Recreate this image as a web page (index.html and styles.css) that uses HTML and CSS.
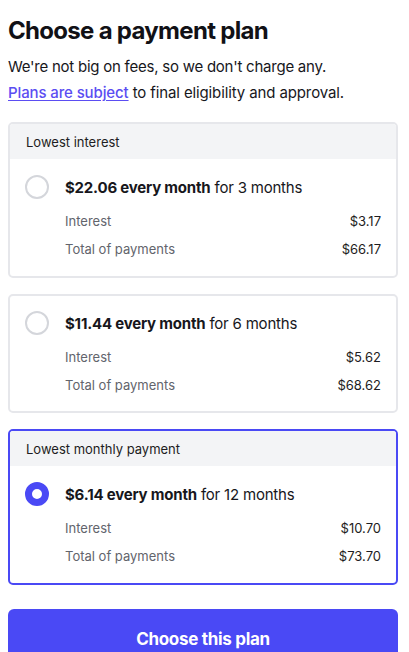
FILE: index.html
```html
<!DOCTYPE html>
<html lang="en">
<head>
<meta charset="utf-8">
<title>Choose a payment plan</title>
<link rel="stylesheet" href="styles.css">
</head>
<body>
<main class="page">
  <h1 class="title">Choose a payment plan</h1>
  <p class="lead lead-fees">We're not big on fees, so we don't charge any.</p>
  <p class="lead"><a class="link" href="#">Plans are subject</a> to final eligibility and approval.</p>

  <div class="plans">
    <div class="card">
      <div class="card-head">Lowest interest</div>
      <div class="card-body">
        <div class="plan-row">
          <span class="radio"></span>
          <span class="plan-text"><b>$22.06 every month</b> for 3 months</span>
        </div>
        <div class="details">
          <div class="detail"><span>Interest</span><span class="val">$3.17</span></div>
          <div class="detail"><span>Total of payments</span><span class="val">$66.17</span></div>
        </div>
      </div>
    </div>

    <div class="card">
      <div class="card-body">
        <div class="plan-row">
          <span class="radio"></span>
          <span class="plan-text"><b>$11.44 every month</b> for 6 months</span>
        </div>
        <div class="details">
          <div class="detail"><span>Interest</span><span class="val">$5.62</span></div>
          <div class="detail"><span>Total of payments</span><span class="val">$68.62</span></div>
        </div>
      </div>
    </div>

    <div class="card selected">
      <div class="card-head">Lowest monthly payment</div>
      <div class="card-body">
        <div class="plan-row">
          <span class="radio checked"></span>
          <span class="plan-text"><b>$6.14 every month</b> for 12 months</span>
        </div>
        <div class="details">
          <div class="detail"><span>Interest</span><span class="val">$10.70</span></div>
          <div class="detail"><span>Total of payments</span><span class="val">$73.70</span></div>
        </div>
      </div>
    </div>
  </div>

  <button class="cta" type="button">Choose this plan</button>
</main>
</body>
</html>
```
FILE: styles.css
```css
* { box-sizing: border-box; }
html, body { margin: 0; padding: 0; background: #fff; }
body {
  font-family: Inter, "Noto Sans", sans-serif;
  color: #17171c;
}
.page {
  padding: 15px 11px 0 8px;
  display: flex;
  flex-direction: column;
}
.title {
  margin: 0;
  font-size: 24px;
  line-height: 32px;
  font-weight: 700;
  letter-spacing: -0.7px;
  color: #111116;
}
.lead {
  margin: 0;
  font-size: 15px;
  line-height: 26px;
  letter-spacing: -0.12px;
}
.lead-fees { letter-spacing: -0.24px; }
.title + .lead { margin-top: 7px; }
.link {
  color: #5b4df2;
  text-decoration: underline;
  text-underline-offset: 2px;
  font-weight: 500;
}
.plans {
  margin-top: 16px;
  display: flex;
  flex-direction: column;
  gap: 16px;
}
.card {
  border: 2px solid #e6e7eb;
  border-radius: 5px;
  overflow: hidden;
  background: #fff;
}
.card.selected { border-color: #4a49f5; }
.card-head {
  background: #f3f4f6;
  height: 35px;
  padding: 0 16px;
  display: flex;
  align-items: center;
  font-size: 13px;
  color: #1d1d22;
}
.card-body {
  padding: 16px 15px 17px 15px;
}
.card-body:first-child {
  padding-top: 15px;
  padding-bottom: 16px;
}
.plan-row {
  display: flex;
  align-items: center;
  gap: 16px;
  height: 24px;
}
.radio {
  width: 24px;
  height: 24px;
  border-radius: 50%;
  border: 2px solid #d4d6db;
  flex: none;
  background: #fff;
}
.radio.checked {
  border: 7px solid #4a49f5;
}
.plan-text {
  font-size: 15px;
  letter-spacing: -0.2px;
  color: #17171c;
}
.plan-text b { font-weight: 700; }
.details {
  margin-top: 12px;
  padding-left: 40px;
  display: flex;
  flex-direction: column;
  gap: 8px;
}
.detail {
  display: flex;
  justify-content: space-between;
  font-size: 13px;
  line-height: 20px;
  color: #62646c;
}
.detail .val { color: #1d1d22; }
.cta {
  margin-top: 24px;
  height: 60px;
  border: none;
  border-radius: 6px;
  background: #4a49f5;
  color: #fff;
  font-family: inherit;
  font-size: 17px;
  font-weight: 700;
  letter-spacing: -0.3px;
  padding: 0;
  width: 100%;
}
```
